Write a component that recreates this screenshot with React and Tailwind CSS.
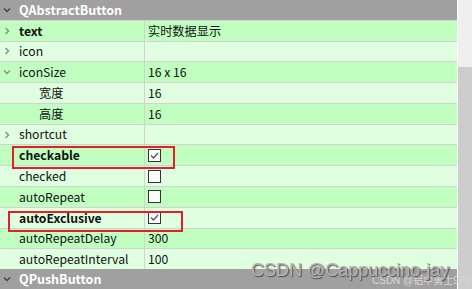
import React from "react";

const rows = [
  { name: "text", value: "实时数据显示", bold: true, arrow: "right" },
  { name: "icon", value: "", arrow: "right" },
  { name: "iconSize", value: "16 x 16", arrow: "down" },
  { name: "宽度", value: "16", child: true },
  { name: "高度", value: "16", child: true },
  { name: "shortcut", value: "", arrow: "right" },
  { name: "checkable", check: true, bold: true },
  { name: "checked", check: false },
  { name: "autoRepeat", check: false },
  { name: "autoExclusive", check: true, bold: true },
  { name: "autoRepeatDelay", value: "300" },
  { name: "autoRepeatInterval", value: "100" },
];

const Chevron = ({ dir, color = "#8a8a8a" }) => (
  <svg width="8" height="8" viewBox="0 0 8 8" className="shrink-0">
    {dir === "down" ? (
      <polyline points="1,2.5 4,5.5 7,2.5" fill="none" stroke={color} strokeWidth="1.4" />
    ) : (
      <polyline points="2.5,1 5.5,4 2.5,7" fill="none" stroke={color} strokeWidth="1.4" />
    )}
  </svg>
);

const CheckBox = ({ checked }) => (
  <div className="w-[13px] h-[13px] border border-[#333333] bg-[#fbfbfb] flex items-center justify-center">
    {checked && (
      <svg width="11" height="11" viewBox="0 0 11 11">
        <polyline points="2,5.5 4.5,8 9,3" fill="none" stroke="#555555" strokeWidth="1.3" />
      </svg>
    )}
  </div>
);

const Header = ({ title }) => (
  <div className="h-[20px] bg-[#a0a0a0] flex items-center">
    <div className="w-[19px] flex items-center pl-[3px]">
      <Chevron dir="down" color="#444444" />
    </div>
    <span className="text-white font-bold text-[12.5px]">{title}</span>
  </div>
);

export default function App() {
  return (
    <div
      className="relative w-[472px] h-[289px] overflow-hidden flex bg-white text-[#111111]"
      style={{ fontFamily: '"Noto Sans CJK SC", "Open Sans", sans-serif' }}
    >
      <div className="w-[457px] flex flex-col">
        <Header title="QAbstractButton" />
        {rows.map((r, i) => (
          <div
            key={r.name}
            className={`h-[21px] border-t border-[#d4d0d4] flex text-[12.2px] leading-none ${
              i % 2 === 0 ? "bg-[#c0ffc0]" : "bg-[#e0ffe0]"
            }`}
          >
            <div className="w-[145px] border-r border-[#d4d0d4] flex items-center">
              <div className="w-[19px] flex items-center pl-[3px]">
                {r.arrow && <Chevron dir={r.arrow} />}
              </div>
              <span className={`${r.child ? "pl-[20px]" : ""} ${r.bold ? "font-bold" : ""}`}>
                {r.name}
              </span>
            </div>
            <div className="flex-1 flex items-center pl-[3px]">
              {r.check !== undefined ? <CheckBox checked={r.check} /> : <span>{r.value}</span>}
            </div>
          </div>
        ))}
        <Header title="QPushButton" />
      </div>
      <div className="w-px bg-white" />
      <div className="w-[14px] flex flex-col">
        <div className="h-[67px] bg-[#efefef]" />
        <div className="flex-1 bg-[#cdcdcd]" />
      </div>

      {/* marked rows */}
      <div className="absolute left-[12px] top-[146px] w-[163px] h-[23px] border-2 border-[#e3202a]" />
      <div className="absolute left-[8px] top-[211px] w-[175px] h-[21px] border-2 border-[#e3202a]" />

      {/* watermarks */}
      <div
        className="absolute left-[372px] top-[273px] text-[10px] text-[#d8d8d8] whitespace-nowrap"
        style={{ fontFamily: '"Liberation Sans", "Noto Sans CJK SC", sans-serif' }}
      >
        CSDN @铝中勇士970
      </div>
      <div
        className="absolute left-[251px] top-[257px] text-[18px] text-[#b4b4b4] whitespace-nowrap [text-shadow:1px_1px_1px_#4a4a4a]"
        style={{ fontFamily: '"Liberation Sans", sans-serif' }}
      >
        CSDN @Cappuccino-jay
      </div>
    </div>
  );
}
